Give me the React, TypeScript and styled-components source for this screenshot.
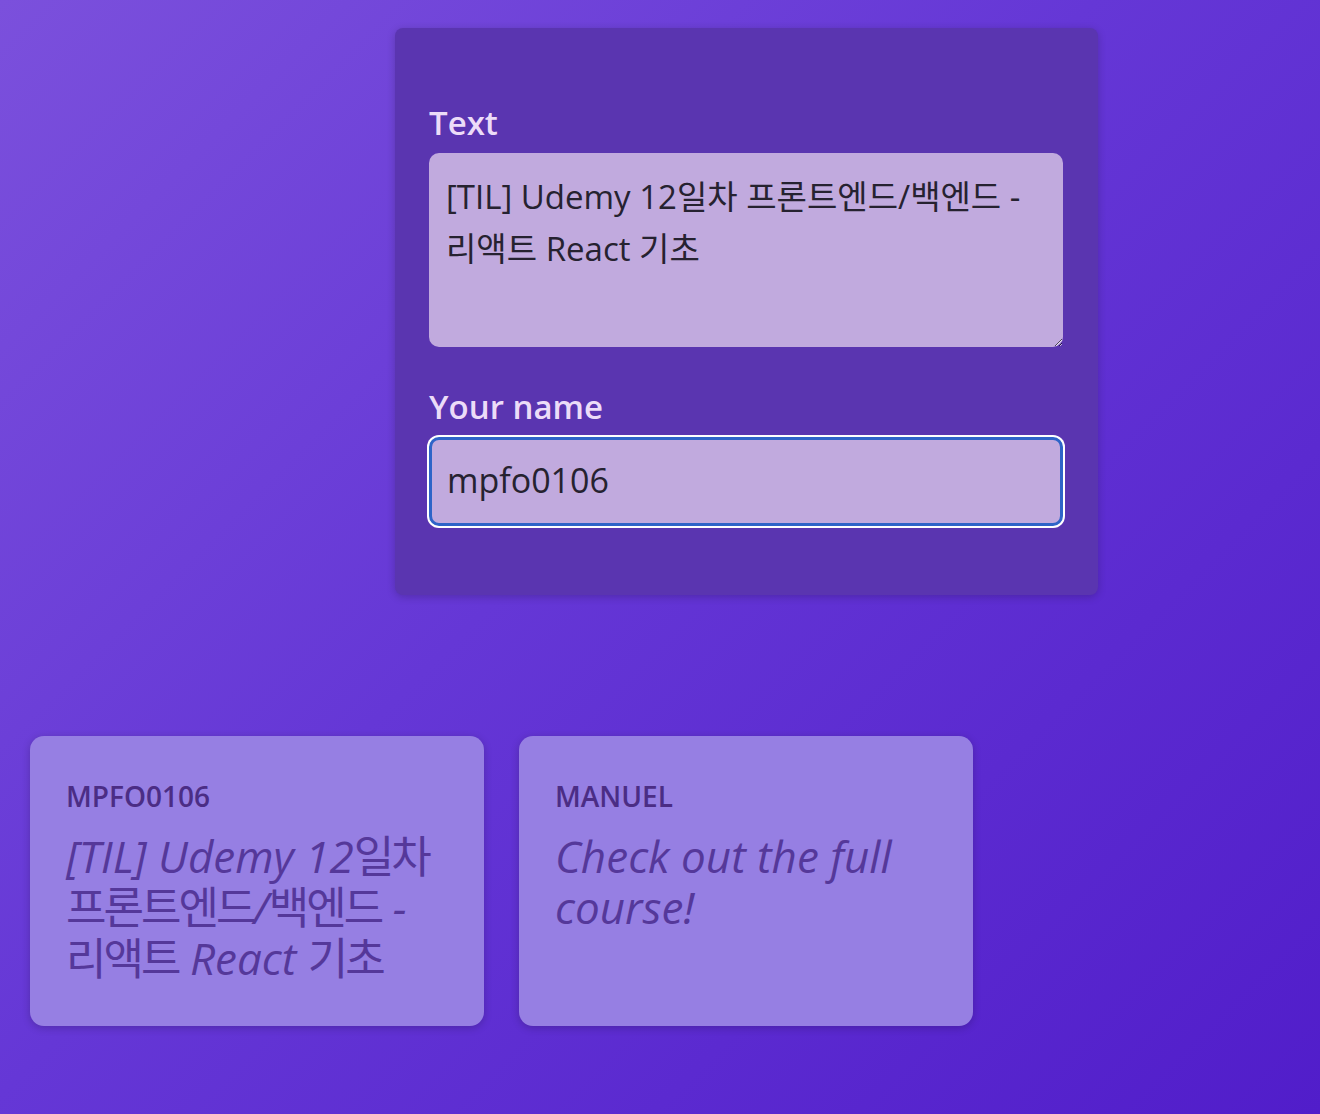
import { createGlobalStyle } from 'styled-components';
import styled from 'styled-components';

const GlobalStyle = createGlobalStyle`
  * {
    box-sizing: border-box;
  }
  html {
    font-family: 'Open Sans', 'Noto Sans CJK KR', sans-serif;
  }
  body {
    margin: 0;
    min-height: 1114px;
    background: linear-gradient(135deg, #7b50dc 0%, #6537d6 45%, #511dca 100%);
  }
`;

const Page = styled.main`
  padding: 28px 0 40px;
`;

const FormCard = styled.form`
  width: 703px;
  margin-left: 395px;
  padding: 77px 34px 69px;
  background: #5a35b0;
  border-radius: 8px;
  box-shadow: 0 2px 8px rgba(0, 0, 0, 0.2);
`;

const Field = styled.p`
  margin: 0;
  & + & {
    margin-top: 42px;
  }
`;

const Label = styled.label`
  display: block;
  margin-bottom: 12px;
  color: #ecdcf8;
  font-size: 33px;
  font-weight: 600;
  line-height: 36px;
`;

const TextArea = styled.textarea`
  display: block;
  width: 634px;
  height: 194px;
  padding: 18px 17px;
  border: none;
  border-radius: 10px;
  background: #c1aade;
  color: #262230;
  font: inherit;
  font-size: 33px;
  line-height: 52px;
  word-break: keep-all;
  outline: none;
`;

const TextInput = styled.input<{ $active?: boolean }>`
  display: block;
  width: 634px;
  height: 89px;
  padding: 0 15px 4px;
  border: 3px solid ${(p) => (p.$active ? '#2e64c8' : 'transparent')};
  border-radius: 10px;
  background: #c1aade;
  color: #262230;
  font: inherit;
  font-size: 34px;
  outline: none;
  box-shadow: ${(p) => (p.$active ? '0 0 0 2px #ffffff' : 'none')};
  caret-color: #111;
`;

const PostList = styled.ul`
  display: flex;
  gap: 35px;
  list-style: none;
  margin: 141px 0 0;
  padding: 0 0 0 30px;
`;

const PostCard = styled.li`
  width: 454px;
  height: 290px;
  padding: 44px 36px;
  background: #967fe3;
  border-radius: 14px;
  box-shadow: 0 2px 8px rgba(0, 0, 0, 0.2);
`;

const Author = styled.h2`
  margin: 0 0 19px;
  color: #4b2d85;
  font-size: 28px;
  font-weight: 600;
  line-height: 32px;
  text-transform: uppercase;
`;

const Body = styled.p`
  margin: 0;
  color: #55389a;
  font-size: 44px;
  font-style: italic;
  line-height: 51px;
  word-break: keep-all;
`;

const Upright = styled.span`
  font-style: normal;
  letter-spacing: -3px;
`;

const splitHangul = (text: string) =>
  text.split(/([\uac00-\ud7a3]+)/).map((part, i) =>
    /[\uac00-\ud7a3]/.test(part) ? <Upright key={i}>{part}</Upright> : part
  );

const posts = [
  { author: 'mpfo0106', body: '[TIL] Udemy 12일차 프론트엔드/백엔드 - 리액트 React 기초' },
  { author: 'Manuel', body: 'Check out the full course!' },
];

const App = () => {
  return (
    <>
      <GlobalStyle />
      <Page>
        <FormCard>
          <Field>
            <Label htmlFor="body">Text</Label>
            <TextArea
              id="body"
              spellCheck={false}
              defaultValue="[TIL] Udemy 12일차 프론트엔드/백엔드 - 리액트 React 기초"
            />
          </Field>
          <Field>
            <Label htmlFor="name">Your name</Label>
            <TextInput id="name" type="text" spellCheck={false} defaultValue="mpfo0106" autoFocus $active />
          </Field>
        </FormCard>
        <PostList>
          {posts.map((post) => (
            <PostCard key={post.author}>
              <Author>{post.author}</Author>
              <Body>{splitHangul(post.body)}</Body>
            </PostCard>
          ))}
        </PostList>
      </Page>
    </>
  );
};

export default App;
